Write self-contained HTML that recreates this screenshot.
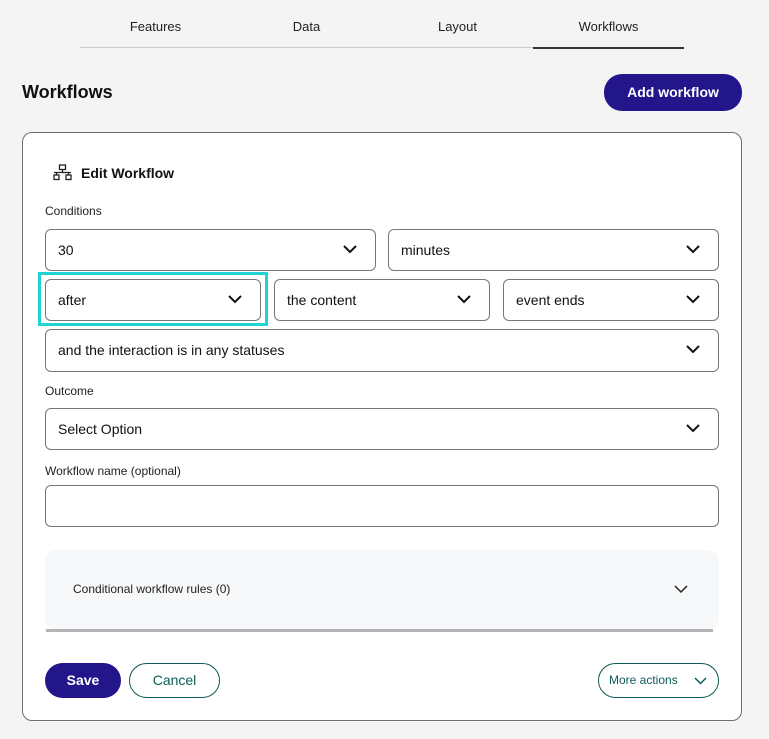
<!DOCTYPE html>
<html><head><style>
*{box-sizing:border-box;margin:0;padding:0}
body{width:769px;height:739px;background:#f4f4f4;font-family:"Liberation Sans",sans-serif;color:#1a1a1a;position:relative;overflow:hidden}
.a{position:absolute}
.tab{position:absolute;top:19px;font-size:13px;color:#222;width:151px;text-align:center}
.sel{position:absolute;height:42px;border:1px solid #777;border-radius:6px;background:#fff;font-size:14px;padding-left:12px;line-height:41px;color:#111}
.sel svg{position:absolute;right:18px;top:15px}
.lbl{position:absolute;left:45px;font-size:12px;color:#222}
.btn{position:absolute;border-radius:18px;font-size:14px;font-weight:bold;text-align:center}
</style></head><body>
<div class="tab" style="left:80px">Features</div>
<div class="tab" style="left:231px">Data</div>
<div class="tab" style="left:382px">Layout</div>
<div class="tab" style="left:533px">Workflows</div>
<div class="a" style="left:80px;top:47px;width:604px;height:1px;background:#ccc"></div>
<div class="a" style="left:533px;top:47px;width:151px;height:2px;background:#333"></div>
<div class="a" style="left:22px;top:82px;font-size:18px;font-weight:bold;color:#111">Workflows</div>
<div class="btn" style="left:604px;top:74px;width:138px;height:37px;line-height:37px;background:#22168a;color:#fff">Add workflow</div>
<div class="a" style="left:22px;top:132px;width:720px;height:589px;background:#fff;border:1px solid #6b6e73;border-radius:10px"></div>
<svg class="a" style="left:53px;top:164px" width="19" height="17" viewBox="0 0 19 17" fill="none" stroke="#222" stroke-width="1.3"><rect x="6.5" y="1" width="6" height="4.5"/><path d="M9.5 5.5V8.5M1 8.5H18M3.5 8.5V11M15.5 8.5V11"/><rect x="1" y="11" width="5" height="4.5"/><rect x="13" y="11" width="5" height="4.5"/></svg>
<div class="a" style="left:81px;top:165px;font-size:14px;font-weight:bold;color:#111">Edit Workflow</div>
<div class="lbl" style="top:204px">Conditions</div>
<div class="sel" style="left:45px;top:229px;width:331px">30<svg width="14" height="9"><path d="M1 1l6 6 6-6" stroke="#111" stroke-width="2" fill="none"/></svg></div>
<div class="sel" style="left:388px;top:229px;width:331px">minutes<svg width="14" height="9"><path d="M1 1l6 6 6-6" stroke="#111" stroke-width="2" fill="none"/></svg></div>
<div class="a" style="left:38px;top:272px;width:230px;height:54px;border:3px solid #22d3d3"></div>
<div class="sel" style="left:45px;top:279px;width:216px">after<svg width="14" height="9"><path d="M1 1l6 6 6-6" stroke="#111" stroke-width="2" fill="none"/></svg></div>
<div class="sel" style="left:274px;top:279px;width:216px">the content<svg width="14" height="9"><path d="M1 1l6 6 6-6" stroke="#111" stroke-width="2" fill="none"/></svg></div>
<div class="sel" style="left:503px;top:279px;width:216px">event ends<svg width="14" height="9"><path d="M1 1l6 6 6-6" stroke="#111" stroke-width="2" fill="none"/></svg></div>
<div class="sel" style="left:45px;top:329px;width:674px;height:43px">and the interaction is in any statuses<svg width="14" height="9"><path d="M1 1l6 6 6-6" stroke="#111" stroke-width="2" fill="none"/></svg></div>
<div class="lbl" style="top:384px">Outcome</div>
<div class="sel" style="left:45px;top:408px;width:674px">Select Option<svg width="14" height="9"><path d="M1 1l6 6 6-6" stroke="#111" stroke-width="2" fill="none"/></svg></div>
<div class="lbl" style="top:464px">Workflow name (optional)</div>
<div class="sel" style="left:45px;top:485px;width:674px"></div>
<div class="a" style="left:45px;top:550px;width:674px;height:79px;background:#f7f8fa;border-radius:10px"></div>
<div class="a" style="left:46px;top:629px;width:667px;height:3px;background:#b3b3b5"></div>
<div class="a" style="left:73px;top:582px;font-size:12px;color:#222">Conditional workflow rules (0)</div>
<svg class="a" style="left:674px;top:585px" width="14" height="9"><path d="M1 1l6 6 6-6" stroke="#222" stroke-width="1.5" fill="none"/></svg>
<div class="btn" style="left:45px;top:663px;width:76px;height:35px;line-height:35px;background:#22168a;color:#fff">Save</div>
<div class="btn" style="left:129px;top:663px;width:91px;height:35px;line-height:33px;border:1px solid #0d5c55;color:#0d5c55;font-weight:normal;font-size:14px">Cancel</div>
<div class="btn" style="left:598px;top:663px;width:121px;height:35px;line-height:32px;border:1px solid #0d5c55;color:#0d5c55;font-weight:normal;font-size:12px;text-align:left;padding-left:10px">More actions<svg style="position:absolute;right:11px;top:13px" width="13" height="8"><path d="M1 1l5.5 5.5L12 1" stroke="#0d5c55" stroke-width="1.5" fill="none"/></svg></div>
</body></html>
